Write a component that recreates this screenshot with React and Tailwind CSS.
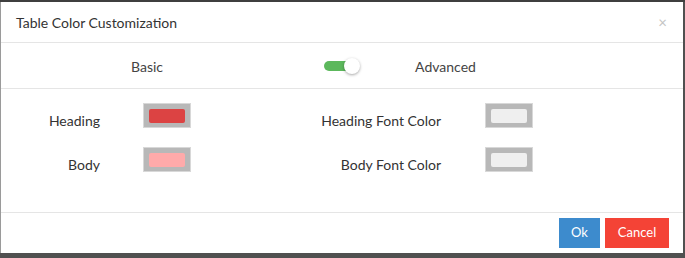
import React from "react";

function Swatch({ color }) {
  return (
    <div className="w-[48px] h-[25px] bg-[#b8b8b8] border border-[#d8d8d8] flex items-center justify-center shrink-0">
      <div className="w-[36px] h-[14px] rounded-[2px]" style={{ backgroundColor: color }} />
    </div>
  );
}

function Row({ label, color, label2, color2 }) {
  return (
    <div className="flex items-start h-[25px]">
      <div className="w-[99px] text-right mt-[7px] leading-[21px] shrink-0">{label}</div>
      <div className="ml-[43px]"><Swatch color={color} /></div>
      <div className="w-[250px] text-right mt-[7px] leading-[21px] shrink-0">{label2}</div>
      <div className="ml-[44px]"><Swatch color={color2} /></div>
    </div>
  );
}

export default function App() {
  return (
    <div className="w-[685px] h-[258px] bg-[#505050] overflow-hidden relative" style={{ fontFamily: "Lato, 'Noto Sans', sans-serif" }}>
      <div className="absolute top-0 left-0 w-full h-[2px] bg-[#3f3f3f]" />
      <div className="mt-[2px] w-[683px] h-[251px] bg-white border-l border-[#9a9a9a] flex flex-col text-[#333]">
        <div className="h-[41px] border-b border-[#e5e5e5] flex items-center justify-between pl-[15px] pr-[16px] shrink-0">
          <span className="text-[14px] text-[#333]">Table Color Customization</span>
          <span className="text-[15px] text-[#c4c4c4] leading-none">×</span>
        </div>
        <div className="h-[46px] border-b border-[#e5e5e5] flex items-center shrink-0 text-[14px] text-[#444]">
          <div className="w-[292px] text-center pt-[1px]">Basic</div>
          <div className="ml-[31px] w-[36px] h-[16px] relative shrink-0">
            <div className="absolute left-0 top-[3px] w-[34px] h-[10px] rounded-full bg-[#5cb85c]" />
            <div className="absolute right-0 top-0 w-[16px] h-[16px] rounded-full bg-white shadow-[0_1px_3px_rgba(0,0,0,0.35)]" />
          </div>
          <div className="w-[171px] text-center pt-[1px]">Advanced</div>
        </div>
        <div className="flex-1 flex flex-col gap-[19px] pt-[14px] text-[14px] text-[#333]">
          <Row label="Heading" color="#dc4343" label2="Heading Font Color" color2="#efefef" />
          <Row label="Body" color="#ffaaaa" label2="Body Font Color" color2="#efefef" />
        </div>
        <div className="h-[41px] border-t border-[#e5e5e5] flex items-start justify-end gap-[5px] pt-[5px] pr-[14px] shrink-0">
          <button className="w-[41px] h-[30px] bg-[#3d8bcd] text-white text-[13px]">Ok</button>
          <button className="w-[64px] h-[30px] bg-[#f44336] text-white text-[13px]">Cancel</button>
        </div>
      </div>
    </div>
  );
}
